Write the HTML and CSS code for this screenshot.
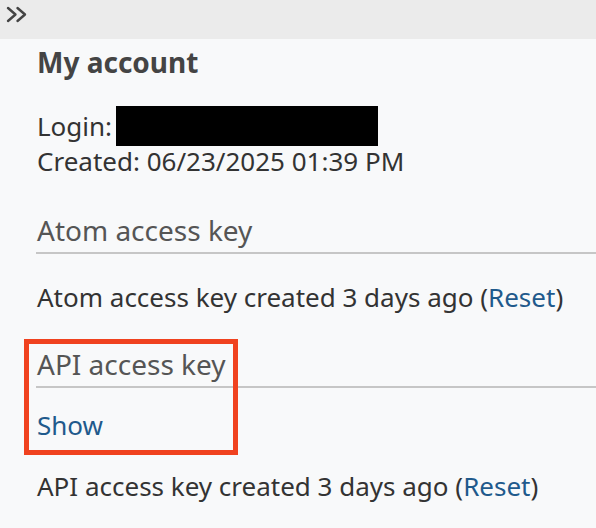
FILE: index.html
```html
<!DOCTYPE html>
<html>
<head>
<meta charset="utf-8">
<link rel="stylesheet" href="styles.css">
</head>
<body>
<div class="topbar">
  <svg class="collapse" width="34" height="30" viewBox="0 0 34 30">
    <polyline points="8,8 15.5,14.5 8,21" fill="none" stroke="#444" stroke-width="2.4" stroke-linecap="round" stroke-linejoin="round"/>
    <polyline points="17.5,8 25,14.5 17.5,21" fill="none" stroke="#444" stroke-width="2.4" stroke-linecap="round" stroke-linejoin="round"/>
  </svg>
</div>
<div class="content">
  <h2 class="title">My account</h2>
  <p class="info">Login: <span class="redact"></span><br>Created: 06/23/2025 01:39 PM</p>
  <h3 class="section first">Atom access key</h3>
  <p class="line atom">Atom access key created 3 days ago (<a href="#">Reset</a>)</p>
  <h3 class="section api">API access key</h3>
  <p class="line show"><a href="#">Show</a></p>
  <p class="line last">API access key created 3 days ago (<a href="#">Reset</a>)</p>
  <div class="highlight"></div>
</div>
</body>
</html>
```
FILE: styles.css
```css
html, body {
  margin: 0;
  padding: 0;
}
body {
  background: #f8f9fa;
  font-family: "Noto Sans", "Open Sans", sans-serif;
  color: #333;
  width: 596px;
  height: 528px;
  overflow: hidden;
}
.topbar {
  height: 39px;
  background: #ebebeb;
}
.collapse {
  display: block;
}
.content {
  position: relative;
  padding: 6px 0 0 37px;
}
.title {
  margin: 0;
  font-size: 28px;
  line-height: 34px;
  font-weight: 700;
  color: #444;
}
.info {
  margin: 30px 0 0 0;
  font-size: 26px;
  line-height: 35px;
}
.redact {
  display: inline-block;
  width: 262px;
  height: 40px;
  margin: -10px 0 -10px -3px;
  background: #000;
  vertical-align: baseline;
}
.section {
  margin: 0 0 0 -1px;
  padding: 0 0 7px 1px;
  font-size: 28px;
  line-height: 30px;
  font-weight: 400;
  color: #555;
  border-bottom: 2px solid #c6c6c6;
}
.section.first {
  margin-top: 36px;
}
.section.api {
  margin-top: 38px;
}
.line {
  margin: 0;
  font-size: 26px;
  line-height: 27px;
}
.line.atom {
  margin-top: 30px;
}
.line.show {
  margin-top: 24px;
}
.line.last {
  margin-top: 34px;
}
a {
  color: #1f5a8c;
  text-decoration: none;
}
.highlight {
  position: absolute;
  left: 24px;
  top: 300px;
  width: 204px;
  height: 106px;
  border: 5px solid #f0421f;
}
```
